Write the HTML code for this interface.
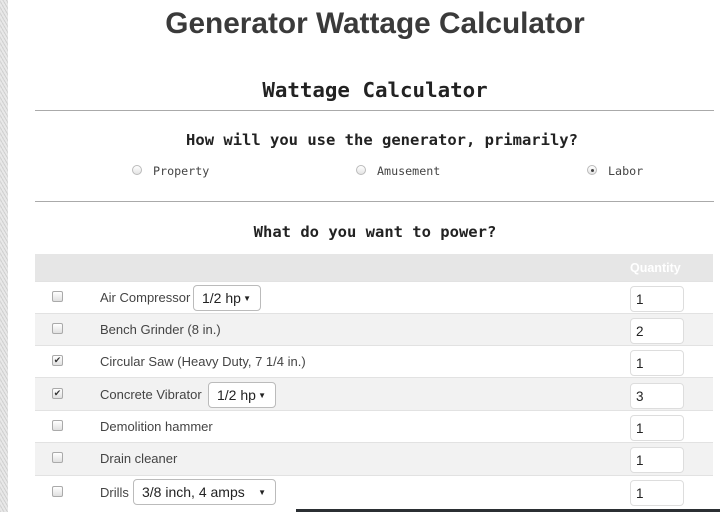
<!DOCTYPE html>
<html><head><meta charset="utf-8"><style>
*{margin:0;padding:0;box-sizing:border-box}
body{width:720px;height:512px;overflow:hidden;background:#fff;position:relative;font-family:"Liberation Sans",sans-serif;color:#333}
.stripe{position:absolute;left:0;top:0;width:8px;height:512px;background:repeating-linear-gradient(60deg,#d0d0d0 0 1px,#e8e8e8 1px 3px)}
.a{position:absolute;white-space:nowrap}
.mono{font-family:"DejaVu Sans Mono","Liberation Mono",monospace}
.hr{position:absolute;left:35px;width:679px;height:1px;background:#aaa}
.radio{position:absolute;width:10px;height:10px;border:1px solid #bbb;border-radius:50%;background:linear-gradient(#fff,#e4e4e4)}
.row{position:absolute;left:35px;width:678px;border-top:1px solid #e2e2e2}
.cb{position:absolute;left:17px;width:11px;height:11px;border:1px solid #aaa;border-radius:2px;background:linear-gradient(#fff,#e0e0e0);font-size:9px;line-height:9px;text-align:center;color:#333}
.lbl{position:absolute;left:65px;font-size:13px;color:#444}
.sel{position:absolute;height:26px;border:1px solid #bbb;border-radius:4px;background:#fff;font-size:14px;color:#222;padding:4px 0 0 8px}
.sel:after{content:"▼";position:absolute;right:9px;top:8px;font-size:8px}
.qty{position:absolute;left:595px;width:54px;height:26px;border:1px solid #ddd;border-radius:4px;background:#fff;font-size:13.5px;color:#222;padding:5px 0 0 5px}
</style></head><body>
<div class="stripe"></div>
<div class="a" style="left:0;width:750px;top:7px;text-align:center;font-size:29.8px;font-weight:bold;color:#3a3a3a">Generator Wattage Calculator</div>
<div class="a mono" style="left:0;width:750px;top:78px;text-align:center;font-size:20.8px;font-weight:bold;color:#222">Wattage Calculator</div>
<div class="hr" style="top:110px"></div>
<div class="a mono" style="left:0;width:764px;top:131px;text-align:center;font-size:15.5px;font-weight:bold;color:#222">How will you use the generator, primarily?</div>
<div class="radio" style="left:132px;top:165px"></div><div class="a mono" style="left:153px;top:164px;font-size:11.7px;color:#444">Property</div>
<div class="radio" style="left:356px;top:165px"></div><div class="a mono" style="left:377px;top:164px;font-size:11.7px;color:#444">Amusement</div>
<div class="radio" style="left:587px;top:165px"><div style="position:absolute;left:2.5px;top:2.5px;width:3.5px;height:3.5px;border-radius:50%;background:#444"></div></div><div class="a mono" style="left:608px;top:164px;font-size:11.7px;color:#444">Labor</div>
<div class="hr" style="top:201px"></div>
<div class="a mono" style="left:0;width:750px;top:223px;text-align:center;font-size:15.5px;font-weight:bold;color:#222">What do you want to power?</div>
<div class="row" style="top:254px;height:27px;background:#e6e6e6;border:none"><div class="a" style="left:595px;top:7px;font-size:12.5px;font-weight:bold;color:#fff">Quantity</div></div>

<div class="row" style="top:281px;height:32px;background:#fff"><div class="cb" style="top:9px"></div><div class="lbl" style="top:8px">Air Compressor</div><div class="sel" style="left:158px;top:3px;width:68px">1/2 hp</div><div class="qty" style="top:4px">1</div></div>
<div class="row" style="top:313px;height:32px;background:#f2f2f2"><div class="cb" style="top:9px"></div><div class="lbl" style="top:8px">Bench Grinder (8 in.)</div><div class="qty" style="top:4px">2</div></div>
<div class="row" style="top:345px;height:32px;background:#fff"><div class="cb" style="top:9px">✔</div><div class="lbl" style="top:8px">Circular Saw (Heavy Duty, 7 1/4 in.)</div><div class="qty" style="top:4px">1</div></div>
<div class="row" style="top:377px;height:33px;background:#f2f2f2"><div class="cb" style="top:10px">✔</div><div class="lbl" style="top:9px">Concrete Vibrator</div><div class="sel" style="left:173px;top:4px;width:68px">1/2 hp</div><div class="qty" style="top:5px">3</div></div>
<div class="row" style="top:410px;height:32px;background:#fff"><div class="cb" style="top:9px"></div><div class="lbl" style="top:8px">Demolition hammer</div><div class="qty" style="top:4px">1</div></div>
<div class="row" style="top:442px;height:33px;background:#f2f2f2"><div class="cb" style="top:9px"></div><div class="lbl" style="top:8px">Drain cleaner</div><div class="qty" style="top:4px">1</div></div>
<div class="row" style="top:475px;height:34px;background:#fff"><div class="cb" style="top:10px"></div><div class="lbl" style="top:9px">Drills</div><div class="sel" style="left:98px;top:3px;width:143px">3/8 inch, 4 amps</div><div class="qty" style="top:4px">1</div></div>
<div class="a" style="left:296px;top:509px;width:424px;height:3px;background:#2b2f33"></div>
</body></html>
